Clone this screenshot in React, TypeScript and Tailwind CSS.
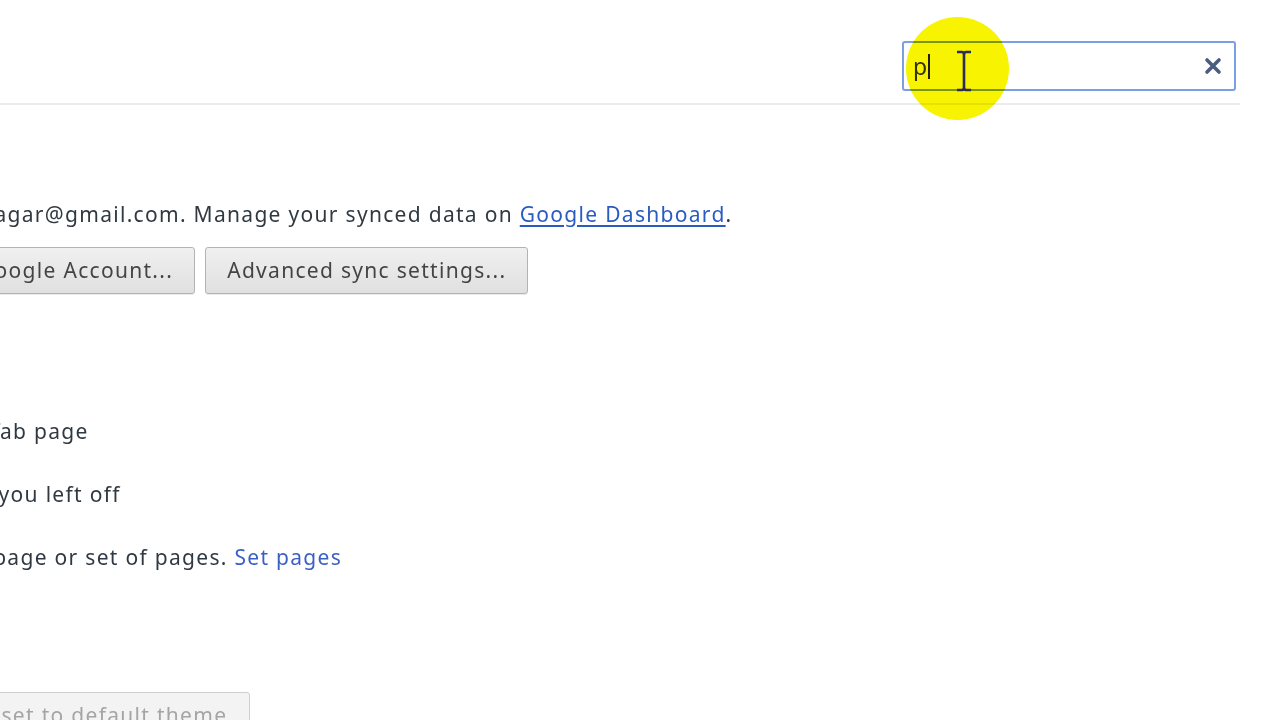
export default function App() {
  const font = { fontFamily: '"Noto Sans", "Open Sans", sans-serif' }
  return (
    <div className="relative w-[1280px] h-[720px] overflow-hidden bg-white text-[#303942]" style={font}>
      {/* header with search */}
      <div className="h-[105px] w-[1240px] border-b-2 border-[#ececec] flex items-start justify-end">
        <div className="mt-[41px] mr-[4px] w-[334px] h-[50px] rounded-[3px] border-2 border-[#7b9fe0] bg-white flex items-center pl-[9px] pr-[12px]">
          <span className="text-[23px] leading-none text-[#333]">p</span>
          <span className="w-[2px] h-[25px] bg-[#222] ml-[1px]" />
          <div className="flex-1" />
          <svg width="18" height="18" viewBox="0 0 18 18">
            <path d="M3 3 L15 15 M15 3 L3 15" stroke="#4c5c80" strokeWidth="3.6" strokeLinecap="round" />
          </svg>
        </div>
      </div>

      {/* content */}
      <div className="flex flex-col text-[21px] tracking-[1.3px]">
        <p className="mt-[94px] -ml-[158px] whitespace-nowrap leading-[30px]">
          Signed in as sagar@gmail.com. Manage your synced data on{" "}
          <span className="text-[#2a5bc2] underline underline-offset-[3px]">Google Dashboard</span>.
        </p>
        <div className="mt-[18px] flex gap-[10px]">
          <button className="-ml-[172px] h-[47px] px-[21px] rounded-[3px] border border-[#b3b3b3] bg-gradient-to-b from-[#f0f0f0] to-[#e0e0e0] shadow-[0_1px_0_rgba(0,0,0,0.08)] text-[#444] whitespace-nowrap">
            Sign out of Google Account...
          </button>
          <button className="h-[47px] px-[21px] rounded-[3px] border border-[#b3b3b3] bg-gradient-to-b from-[#f0f0f0] to-[#e0e0e0] shadow-[0_1px_0_rgba(0,0,0,0.08)] text-[#444] whitespace-nowrap">
            Advanced sync settings...
          </button>
        </div>
        <p className="mt-[122px] -ml-[175px] whitespace-nowrap leading-[30px]">Open the New Tab page</p>
        <p className="mt-[33px] -ml-[183px] whitespace-nowrap leading-[30px]">Continue where you left off</p>
        <p className="mt-[33px] -ml-[183px] whitespace-nowrap leading-[30px]">
          Open a specific page or set of pages. <span className="text-[#3b5fc4]">Set pages</span>
        </p>
        <div className="mt-[120px] flex">
          <button className="-ml-[49px] h-[47px] px-[22px] rounded-[3px] border border-[#cfcfcf] bg-[#f3f3f3] text-[#a5a5a5] whitespace-nowrap">
            Reset to default theme
          </button>
        </div>
      </div>

      {/* cursor highlight */}
      <div className="absolute left-[906px] top-[17px] w-[103px] h-[103px] rounded-full bg-[#f8f300] mix-blend-multiply" />
      <svg className="absolute left-[955px] top-[50px]" width="18" height="42" viewBox="0 0 18 42">
        <path d="M2 2 H7 Q9 2 9 5 V37 Q9 40 7 40 H2 M16 2 H11 Q9 2 9 5 M9 37 Q9 40 11 40 H16" fill="none" stroke="#2b2b55" strokeWidth="2.6" />
      </svg>
    </div>
  )
}
